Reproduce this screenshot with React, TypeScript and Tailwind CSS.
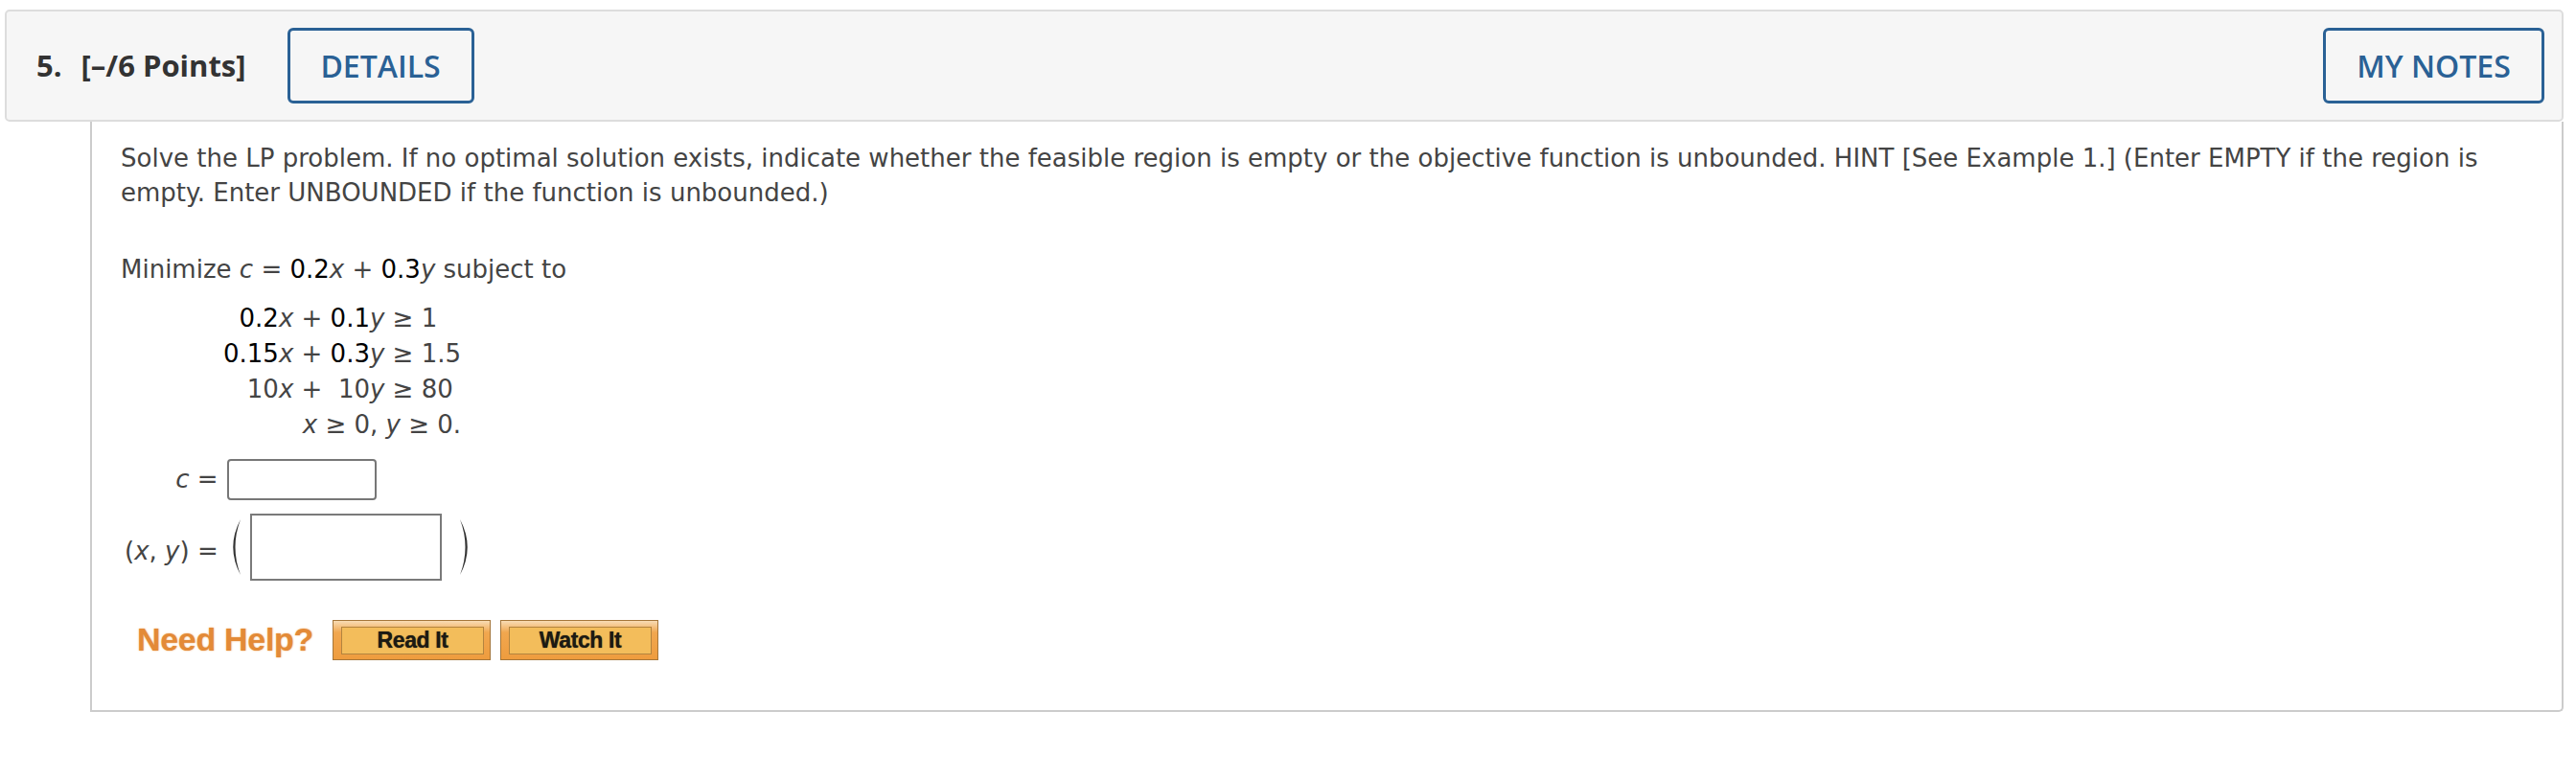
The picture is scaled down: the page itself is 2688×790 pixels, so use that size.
import React from 'react';

const Paren = ({ close = false }: { close?: boolean }) => (
  <svg width="15" height="58" viewBox="0 0 15 58" className={close ? 'scale-x-[-1]' : ''}>
    <path d="M14 0 Q-1.5 29 14 58 Q3 29 14 0 Z" fill="#333" />
  </svg>
);

const HelpButton = ({ label }: { label: string }) => (
  <div className="w-[165px] h-[42px] border border-[#a5763a] bg-[linear-gradient(to_bottom,#f8dcb4_0%,#f1a74f_30%,#ee9c3e_100%)] pt-[6px] pb-[5px] pl-[8px] pr-[6px] flex">
    <div className="flex-1 border border-[#b3843f] bg-[#f3bd5b] flex items-center justify-center">
      <span className="font-['Liberation_Sans',Arial,sans-serif] font-bold text-[23px] text-[#1c1a14] tracking-[-0.4px] leading-none [text-shadow:0_0_1px_#3a2a10]">
        {label}
      </span>
    </div>
  </div>
);

export default function App() {
  const k = 'text-black';
  return (
    <div className="w-[2688px] h-[790px] bg-white overflow-hidden">
      {/* Question header */}
      <div className="ml-[5px] mt-[10px] w-[2670px] h-[117px] border-2 border-[#dddddd] rounded-[5px] bg-[#f6f6f6] flex items-center justify-between pl-[31px] pr-[18px] font-['Open_Sans',sans-serif]">
        <div className="flex items-center">
          <span className="text-[31px] font-bold text-[#333]">5.</span>
          <span className="ml-[20px] text-[31px] font-bold text-[#333]">[–/6 Points]</span>
          <button className="ml-[43px] w-[195px] h-[79px] border-[3px] border-[#2a6195] rounded-[6px] text-[32px] font-semibold text-[#2a6195] flex items-center justify-center">
            DETAILS
          </button>
        </div>
        <button className="w-[231px] h-[79px] border-[3px] border-[#2a6195] rounded-[6px] text-[32px] font-semibold text-[#2a6195] flex items-center justify-center">
          MY NOTES
        </button>
      </div>

      {/* Question body */}
      <div className="ml-[94px] w-[2581px] border-x-2 border-b-2 border-[#cccccc] rounded-br-[5px] pt-[20px] pb-[48px] pl-[30px] pr-[30px] font-['DejaVu_Sans',Verdana,sans-serif] text-[26px] text-[#444]">
        <p className="leading-[36px]">
          Solve the LP problem. If no optimal solution exists, indicate whether the feasible region is empty or the
          objective function is unbounded. HINT [See Example 1.] (Enter EMPTY if the region is empty. Enter UNBOUNDED
          if the function is unbounded.)
        </p>

        <p className="mt-[46px] leading-[33px]">
          Minimize <i>c</i> = <span className={k}>0.2</span>
          <i>x</i> + <span className={k}>0.3</span>
          <i>y</i> subject to
        </p>

        <div className="mt-[16px] ml-[107px] w-fit grid grid-cols-[auto_auto_auto_auto] leading-[37px] whitespace-pre">
          <span className="text-right">
            <span className={k}>0.2</span>
            <i>x</i>
          </span>
          <span> + </span>
          <span className="text-right">
            <span className={k}>0.1</span>
            <i>y</i>
          </span>
          <span> ≥ 1</span>

          <span className="text-right">
            <span className={k}>0.15</span>
            <i>x</i>
          </span>
          <span> + </span>
          <span className="text-right">
            <span className={k}>0.3</span>
            <i>y</i>
          </span>
          <span> ≥ 1.5</span>

          <span className="text-right">
            10<i>x</i>
          </span>
          <span> + </span>
          <span className="text-right">
            10<i>y</i>
          </span>
          <span> ≥ 80</span>

          <span className="col-span-4 text-right">
            <i>x</i> ≥ 0, <i>y</i> ≥ 0.
          </span>
        </div>

        <div className="mt-[17px] ml-[4px] w-fit grid grid-cols-[auto_auto] gap-x-[9px] gap-y-[14px] items-center">
          <span className="text-right">
            <i>c</i> =
          </span>
          <div className="w-[156px] h-[43px] border-2 border-[#777] rounded-[4px] bg-white" />

          <span className="text-right mt-[8px]">
            (<i>x</i>, <i>y</i>) =
          </span>
          <div className="flex items-center">
            <Paren />
            <div className="ml-[9px] w-[200px] h-[70px] border-2 border-[#7a7a7a] bg-white" />
            <div className="ml-[18px]">
              <Paren close />
            </div>
          </div>
        </div>

        <div className="mt-[36px] ml-[17px] flex items-center">
          <span className="font-['Liberation_Sans',Arial,sans-serif] font-bold text-[34px] text-[#e38a37] tracking-[-0.3px] [text-shadow:0_0_2px_#f0b070]">
            Need Help?
          </span>
          <div className="ml-[20px] flex gap-[10px]">
            <HelpButton label="Read It" />
            <HelpButton label="Watch It" />
          </div>
        </div>
      </div>
    </div>
  );
}
